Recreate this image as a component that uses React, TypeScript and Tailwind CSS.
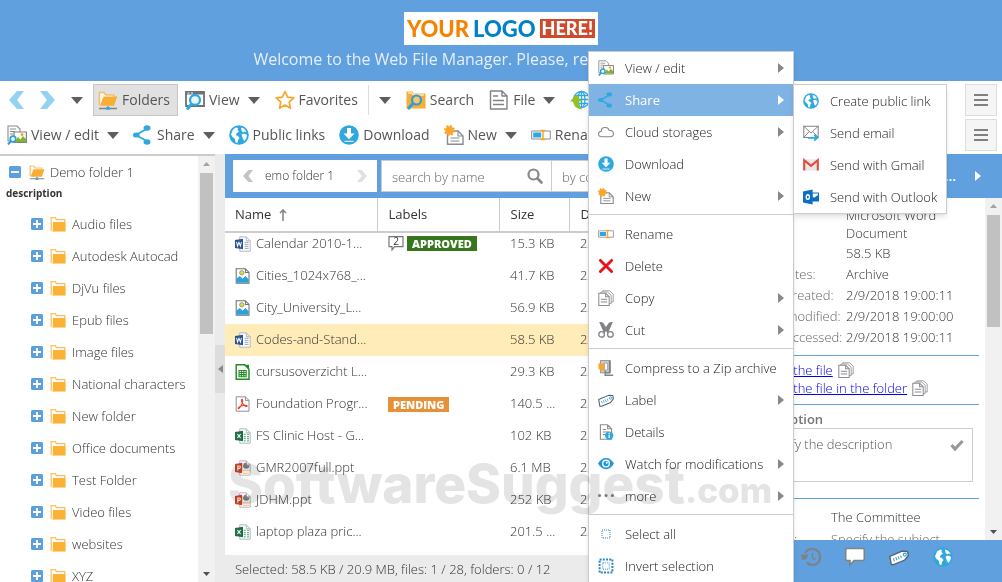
import type { ReactNode } from 'react';

type IconName =
  | 'viewEdit' | 'share' | 'cloud' | 'download' | 'newDoc' | 'rename' | 'delete' | 'copy' | 'cut'
  | 'zip' | 'label' | 'details' | 'eye' | 'more' | 'selectAll' | 'invert' | 'globe' | 'email'
  | 'gmail' | 'outlook' | 'folderOpen' | 'view' | 'star' | 'search' | 'file' | 'webUpload'
  | 'folder' | 'word' | 'image' | 'calc' | 'pdf' | 'excel' | 'ppt' | 'history' | 'comment';

const page = <path d="M3 1h9l5 5v13H3z M12 1v5h5" fill="#fff" stroke="#8a8c90" strokeWidth="1.4" strokeLinejoin="round" />;

const officePage = (
  <path d="M6 1h8l5 5v13H6z M14 1v5h5" fill="#fff" stroke="#a9adb3" strokeWidth="1.1" />
);

const glyphs: Record<IconName, ReactNode> = {
  viewEdit: (
    <>
      <path d="M1 1h9l3 3v12H1z" fill="#fff" stroke="#8a8c90" strokeWidth="1.1" />
      <path d="M3 4h6M3 6.500h5M3 9h3" stroke="#8a8c90" />
      <path d="M7 7h12.400v10.500H7z" fill="#fff" stroke="#808285" strokeWidth="1.2" />
      <path d="m8 17 3-5 2.500 2.500L16 11l3 3v3z" fill="#7fb42a" />
      <circle cx="15" cy="9.500" r="1.500" fill="#f9a72b" />
      <circle cx="6" cy="14" r="2.800" fill="#fff" stroke="#2c9fdc" strokeWidth="1.700" />
      <path d="m4 16-3 3.500" stroke="#2c9fdc" strokeWidth="2" />
    </>
  ),
  share: (
    <>
      <path d="M14.500 3.500 3 10l11.500 6.500" fill="none" stroke="#2fa8e0" strokeWidth="1.800" />
      <ellipse cx="3.300" cy="10" rx="3.300" ry="2.600" fill="#2fa8e0" />
      <ellipse cx="14" cy="3" rx="3.500" ry="2.700" fill="#2fa8e0" />
      <ellipse cx="14" cy="17" rx="3.500" ry="2.700" fill="#2fa8e0" />
    </>
  ),
  cloud: (
    <path d="M5 16q-4.300 0-4.300-3.500Q.700 9.500 4 9q0-4.500 5-4.500 4 0 4.800 3.300 5.500 0 5.500 4.200 0 4-4 4z" fill="#fff" stroke="#808285" strokeWidth="1.300" />
  ),
  download: (
    <>
      <circle cx="10" cy="10" r="9.800" fill="#2fa8e0" />
      <path d="M8 3h4v5.500h3.500L10 14.200 4.500 8.500H8z" fill="#fff" />
      <path d="M5.500 16.300h9" stroke="#fff" strokeWidth="1" />
    </>
  ),
  newDoc: (
    <>
      <path d="M3.500 6H14l5 5v8.300H3.500z" fill="#fff" stroke="#8a8c90" strokeWidth="1.400" />
      <path d="M14 6v5h5M6.500 13h9M6.500 16h9" fill="none" stroke="#8a8c90" strokeWidth="1.100" />
      <circle cx="5.500" cy="5.500" r="4.300" fill="#f9a72b" />
      <circle cx="5.500" cy="5.500" r="4.500" fill="none" stroke="#f9a72b" strokeWidth="2.200" strokeDasharray="1.800 1.730" />
    </>
  ),
  rename: (
    <>
      <path d="M.700 6h18.600v8H.700z" fill="#fff" stroke="#8a8c90" />
      <path d="M2.200 7.500h8v5h-8z" fill="#2fa8e0" />
      <path d="M9.500 5.500h5M9.500 14.500h5M12 5.500v9" stroke="#f9a72b" strokeWidth="1.500" />
    </>
  ),
  delete: <path d="m3 3 14 14M17 3 3 17" stroke="#e5141b" strokeWidth="3.600" strokeLinecap="round" />,
  copy: (
    <>
      <path d="M6 1h8.500L19 5v10H6z" fill="#fff" stroke="#8a8c90" />
      <path d="M3.500 2.500H12l4.500 4V17h-13z" fill="#fff" stroke="#8a8c90" />
      <path d="M1 4h8.500L14 8.500v10.800H1z" fill="#fff" stroke="#8a8c90" strokeWidth="1.300" />
      <path d="M9.500 4v4.500H14M3.500 11.500h8M3.500 15h8" fill="none" stroke="#8a8c90" strokeWidth="1.300" />
    </>
  ),
  cut: (
    <>
      <path d="M2.500.500 6 1.500l4.500 7L8 13zM17.500.500 14 1.500l-4.500 7L12 13z" fill="#808285" stroke="#808285" strokeWidth="1.500" />
      <circle cx="4.500" cy="15.500" r="3.500" fill="#fff" stroke="#808285" strokeWidth="1.600" />
      <circle cx="15.500" cy="15.500" r="3.500" fill="#fff" stroke="#808285" strokeWidth="1.600" />
    </>
  ),
  zip: (
    <>
      <path d="M3 .700h12.500V16H3z" fill="#c9cbce" stroke="#808285" />
      <path d="M14.500 1v15M9 13v3h6M9 17v2h10" fill="none" stroke="#808285" strokeWidth="1.800" />
      <path d="M.500 4.500h7.500v9H4l-3.500-3z" fill="#f9a72b" />
      <path d="M8 4h4v8.500H8z" fill="#fff" stroke="#9a9c9f" />
    </>
  ),
  label: (
    <>
      <path d="M.800 9.300 13 4.200l5.500.300.800 4-3.500 4.500L4.500 17.700H2.300z" fill="#fff" stroke="#54606e" strokeWidth="1.300" strokeLinejoin="round" />
      <circle cx="15.800" cy="7.600" r="1.500" fill="#fff" stroke="#39a9e0" strokeWidth="1.200" />
      <path d="m4.300 11.200 1.200 3M6.700 10.300l1.200 3M9.100 9.400l1.200 3M11.500 8.500l1 2.500" stroke="#39a9e0" strokeWidth="1.100" />
    </>
  ),
  details: (
    <>
      {page}
      <path d="M6 7h4M6 10h7M6 13h4" stroke="#8a8c90" strokeWidth="1.300" />
      <circle cx="14" cy="14.500" r="5.200" fill="#2fa8e0" />
      <path d="M14 13.500v4M14 11v1.500" stroke="#fff" strokeWidth="1.500" />
    </>
  ),
  eye: (
    <>
      <path d="M0 9.500Q4 2.500 10 2.500t10 7q-4 7-10 7t-10-7z" fill="#1e97dc" />
      <circle cx="10" cy="9.500" r="5" fill="#fff" />
      <circle cx="10" cy="9.500" r="3.300" fill="#1e97dc" />
      <circle cx="11" cy="8.500" r="1.200" fill="#fff" />
    </>
  ),
  more: (
    <g fill="#808285">
      <circle cx="2" cy="9.500" r="1.900" />
      <circle cx="10" cy="9.500" r="1.900" />
      <circle cx="18" cy="9.500" r="1.900" />
    </g>
  ),
  selectAll: <path d="M5 5h10v10H5z" fill="none" stroke="#2b87c8" strokeWidth="1.300" strokeDasharray="1.250 1.250" />,
  invert: (
    <>
      <path d="M2 2h16v16H2z" fill="none" stroke="#2b87c8" strokeWidth="2.500" strokeDasharray="2.500 1.500" />
      <path d="M6 6h8v8H6z" fill="none" stroke="#2b87c8" strokeWidth="1.200" strokeDasharray="1.250 1.250" />
    </>
  ),
  globe: (
    <>
      <circle cx="10" cy="10" r="9.800" fill="#2fa8e0" />
      <path d="M4 4.500 7 2.500l2 .500-.500 2L10 6.500 8 8l-1.500 2 2.500 1 1.500 2-1.500 2-.500 3-2-.500-.500-3.500-2.500-2L2 9.500z" fill="#fff" />
      <path d="m12 2.500 3 1 2.800 3.500-2.300-.500-1.500 1-1.500-2zM12.500 9.500l3-1 2.500 1.500-.500 3-2 3-1.500-2z" fill="#fff" />
    </>
  ),
  email: (
    <>
      <path d="M1 1.500h18v14H1z" fill="#fff" stroke="#808285" strokeWidth="1.300" />
      <path d="m1 1.500 9 8.500 9-8.500M1 15.500l6.500-7M19 15.500l-6.500-7" fill="none" stroke="#808285" strokeWidth="1.200" />
      <path d="M6 16h11M14 12.500l4 3.500-4 3.500" fill="none" stroke="#2fa8e0" strokeWidth="2.200" />
    </>
  ),
  gmail: (
    <>
      <path d="M1 3h18v14H1z" fill="#e8e8e8" />
      <path d="M1.500 17V4l8.500 7 8.500-7v13" fill="none" stroke="#e14a3c" strokeWidth="2.600" />
    </>
  ),
  outlook: (
    <>
      <path d="M11 5h8.500v10H11z" fill="#fff" stroke="#0a6fc2" strokeWidth="1.500" />
      <path d="m11 9 3 2 5.500-4v8H11z" fill="#0a6fc2" />
      <path d="m0 3 12-2.500v19L0 17z" fill="#0a6fc2" />
      <ellipse cx="6" cy="10" rx="2" ry="2.800" fill="none" stroke="#fff" strokeWidth="1.700" />
    </>
  ),
  folderOpen: (
    <>
      <path d="M1.500 15V2.500H6L7.500 5H16v3" fill="#fff" stroke="#fbbd61" strokeWidth="1.500" />
      <path d="M5.500 6.500H19.300L16 15.800H2z" fill="#f9ad33" />
      <path d="M1 18.500h18M10 16v2" stroke="#808285" strokeWidth="1.300" />
      <path d="M8 17.300h4v2.400H8z" fill="#2fa8e0" />
    </>
  ),
  view: (
    <>
      <path d="M1 2h18v14H1z" fill="#fff" stroke="#6e7074" strokeWidth="1.800" />
      <path d="M1 3h18" stroke="#6e7074" strokeWidth="3" />
      <path d="M2.500 3h2M6 3h2" stroke="#fff" />
      <circle cx="10" cy="10" r="5" fill="#e9f6fd" stroke="#2fa8e0" strokeWidth="2.300" />
      <path d="m6.500 14-4.500 5.500" stroke="#2fa8e0" strokeWidth="3" />
    </>
  ),
  star: (
    <path d="m10 1.500 2.600 5.700 6.200.700-4.600 4.200 1.300 6.200-5.500-3.200-5.500 3.200 1.300-6.200L1.200 7.900l6.200-.700z" fill="#fff" stroke="#f9a72b" strokeWidth="1.700" strokeLinejoin="round" />
  ),
  search: (
    <>
      <path d="M.500 18.500V1.500h6l1 2h12v15z" fill="#f9ad33" />
      <path d="M2 3h4l1 2h11" fill="none" stroke="#fff" />
      <circle cx="10.500" cy="10" r="4.500" fill="#f9c46c" stroke="#2c9fdc" strokeWidth="2.200" />
      <path d="m7 13.500-5 5.500" stroke="#2c9fdc" strokeWidth="3" />
    </>
  ),
  file: (
    <>
      <path d="M1.500 1H13l5 5v13H1.500z M13 1v5h5" fill="#fff" stroke="#808285" strokeWidth="1.400" strokeLinejoin="round" />
      <path d="M4 6h5M4 10.500h11M4 14.500h11" stroke="#808285" strokeWidth="1.300" />
    </>
  ),
  webUpload: (
    <>
      <g fill="#fff" stroke="#2fa8e0" strokeWidth="1.300">
        <circle cx="11.500" cy="9.500" r="8" />
        <ellipse cx="11.500" cy="9.500" rx="3.500" ry="8" />
        <path d="M5 5.500h13M3.500 9.500h16M5 13.500h13M11.500 1.500v16" />
      </g>
      <path d="m6 4.500 6 7H8.500q0 5 4 8Q3.500 19 3.500 11.500H0z" fill="#94c11f" />
    </>
  ),
  folder: (
    <>
      <path d="M1.500 19V2h5L8 4.500h10.500V8" fill="#fff" stroke="#fbbd61" strokeWidth="1.500" />
      <path d="M1.500 17.500 3 19.300h16V18" fill="none" stroke="#fbd08c" />
      <path d="M3.500 7.500h16V19h-16z" fill="#f9b233" />
    </>
  ),
  word: (
    <>
      {officePage}
      <path d="M12 8h5M12 10.500h5M12 13h5M12 15.500h5" stroke="#7f93b0" />
      <path d="m0 5 10-1.500v13L0 15z" fill="#2a5699" />
      <path d="m2 7.500 1.200 5L5 8l1.800 4.500L8 7.500" fill="none" stroke="#fff" strokeWidth="1.300" />
    </>
  ),
  image: (
    <>
      <path d="M1.500 1H13l4.500 4.500V19h-16z M13 1v4.500h4.500" fill="#fff" stroke="#6e7074" strokeWidth="1.300" />
      <circle cx="8.500" cy="6" r="2.700" fill="#e9d94a" stroke="#808285" />
      <path d="M2 18.500v-5L6 10l3.500 3.500L13 10l4 4v4.500z" fill="#2c9fdc" />
    </>
  ),
  calc: (
    <>
      <path d="M1.500 1H12l5.500 5.500V19h-16z" fill="#fff" stroke="#238a26" strokeWidth="1.800" />
      <path d="M12 1h5.500v5.500z" fill="#238a26" />
      <path d="M5 8h9v8H5zM5 10.700h9M5 13.300h9M8 8v8M11 8v8" fill="none" stroke="#238a26" strokeWidth="1.300" />
    </>
  ),
  pdf: (
    <>
      <path d="M1.500 1H13l4.500 4.500V19h-16z M13 1v4.500h4.500" fill="#fff" stroke="#8a8c90" strokeWidth="1.200" />
      <path d="M8.500 4q2 0 .500 5-1.500 5-4.500 7-2-1 3-3.500 4-1.500 7.500-.500.500 2-2.500.500Q8 9 8 5z" fill="none" stroke="#e5432e" strokeWidth="1.300" />
    </>
  ),
  excel: (
    <>
      {officePage}
      <path d="M11 8h2.500M15 8h2.500M11 10.700h2.500M15 10.700h2.500M11 13.400h2.500M15 13.400h2.500M11 16h2.500M15 16h2.500" stroke="#6db58a" strokeWidth="1.500" />
      <path d="m0 5 10-1.500v13L0 15z" fill="#1e7145" />
      <path d="m3 7.500 4 5M7 7.500l-4 5" stroke="#fff" strokeWidth="1.400" />
    </>
  ),
  ppt: (
    <>
      {officePage}
      <path d="M12 3.500h2.500v3H18q0 4.500-4 4.500t-4-4z" fill="#808285" />
      <path d="M10 13.500h8M10 16.500h8" stroke="#f0b26a" strokeWidth="1.200" />
      <path d="m0 5 9-1.500v13L0 15z" fill="#d24625" />
      <path d="M3.500 13V7.500H6q1.500 1.500 0 3H3.500" fill="none" stroke="#fff" strokeWidth="1.400" />
    </>
  ),
  history: (
    <>
      <path d="M4 6q3-4.500 8-4 7 1 7 8t-7 8q-4 0-6-2.500" fill="none" stroke="#808285" strokeWidth="2.200" />
      <path d="M0 7.500h7.500L5.500 12 1 13z" fill="#808285" />
      <path d="M11.500 6v5l3 1.500" fill="none" stroke="#808285" strokeWidth="1.500" />
    </>
  ),
  comment: (
    <path d="M2 1.500h16q1.300 0 1.300 1.500v9q0 1.500-1.300 1.500H9L5 18v-4.500H2Q.700 13.500.700 12V3Q.700 1.500 2 1.500z" fill="#fff" stroke="#808285" strokeWidth="1.600" />
  ),
};

function Icon({ name, className = 'size-5' }: { name: IconName; className?: string }) {
  return (
    <svg viewBox="0 0 20 20" className={`shrink-0 ${className}`} aria-hidden="true">
      {glyphs[name]}
    </svg>
  );
}

function Caret() {
  return (
    <svg viewBox="0 0 12 7" className="h-[7px] w-3 shrink-0 text-[#5e5e5e]" aria-hidden="true">
      <path d="M0 0h12L6 7z" fill="currentColor" />
    </svg>
  );
}

function RightArrow({ className }: { className: string }) {
  return (
    <svg viewBox="0 0 6 10" className={`h-2.5 w-1.5 shrink-0 ${className}`} aria-hidden="true">
      <path d="M0 0v10l6-5z" fill="currentColor" />
    </svg>
  );
}

function Chevron({ left = false, className }: { left?: boolean; className: string }) {
  return (
    <svg viewBox="0 0 15 18" className={`shrink-0 ${className}`} aria-hidden="true">
      <path d={left ? 'M8 0h7L8 9l7 9H8L0 9z' : 'M7 0H0l7 9-7 9h7l8-9z'} fill="currentColor" />
    </svg>
  );
}

interface Tool {
  icon: IconName;
  text: string;
  menu?: boolean;
  active?: boolean;
}

function ToolButton({ icon, text, menu, active }: Tool) {
  return (
    <button
      className={`flex h-8 shrink-0 items-center gap-1 border pr-[7px] pl-1 ${
        active ? 'border-[#c6c6c6] bg-[#e1e1e1]' : 'border-transparent'
      }`}
    >
      <Icon name={icon} />
      <span>{text}</span>
      {menu && (
        <span className="pl-1">
          <Caret />
        </span>
      )}
    </button>
  );
}

const mainTools: Tool[] = [
  { icon: 'folderOpen', text: 'Folders', active: true },
  { icon: 'view', text: 'View', menu: true },
  { icon: 'star', text: 'Favorites' },
];

const extraTools: Tool[] = [
  { icon: 'search', text: 'Search' },
  { icon: 'file', text: 'File', menu: true },
  { icon: 'webUpload', text: 'Web folders' },
];

const fileTools: Tool[] = [
  { icon: 'viewEdit', text: 'View / edit', menu: true },
  { icon: 'share', text: 'Share', menu: true },
  { icon: 'globe', text: 'Public links' },
  { icon: 'download', text: 'Download' },
  { icon: 'newDoc', text: 'New', menu: true },
  { icon: 'rename', text: 'Rename' },
];

function Toolbar() {
  return (
    <div className="flex h-[73px] shrink-0 bg-white text-sm text-[#555]">
      <div className="flex min-w-0 flex-1 flex-col gap-[3px] overflow-hidden pt-[3px]">
        <div className="flex items-center gap-[2px] pl-px">
          <button className="px-2 text-[#93d2f2]" aria-label="Back">
            <Chevron left className="h-[18px] w-[15px]" />
          </button>
          <button className="px-1.5 text-[#93d2f2]" aria-label="Forward">
            <Chevron className="h-[18px] w-[15px]" />
          </button>
          <button className="px-2" aria-label="History">
            <Caret />
          </button>
          {mainTools.map((tool) => (
            <ToolButton key={tool.text} {...tool} />
          ))}
          <div className="h-[30px] w-px shrink-0 bg-[#ddd]" />
          <button className="px-2" aria-label="More favorites">
            <Caret />
          </button>
          {extraTools.map((tool) => (
            <ToolButton key={tool.text} {...tool} />
          ))}
        </div>
        <div className="flex items-center gap-px pl-[2px]">
          {fileTools.map((tool) => (
            <ToolButton key={tool.text} {...tool} />
          ))}
        </div>
      </div>
      <div className="flex flex-col gap-[3px] px-[5px] pt-[3px]">
        {['Main menu', 'File menu'].map((name) => (
          <button
            key={name}
            aria-label={name}
            className="flex size-8 flex-col items-center justify-center gap-[3px] border border-[#ddd] bg-[#f5f5f5]"
          >
            <span className="h-[2px] w-3.5 bg-[#808080]" />
            <span className="h-[2px] w-3.5 bg-[#808080]" />
            <span className="h-[2px] w-3.5 bg-[#808080]" />
          </button>
        ))}
      </div>
    </div>
  );
}

function ScrollBar({ thumb }: { thumb: string }) {
  return (
    <div className="flex w-[17px] shrink-0 flex-col items-center bg-[#f1f1f1] py-1.5">
      <svg viewBox="0 0 7 4" className="mb-[7px] h-1 w-[7px] shrink-0" aria-hidden="true">
        <path d="M0 4h7L3.500 0z" fill="#a3a3a3" />
      </svg>
      <div className={`w-[13px] bg-[#c1c1c1] ${thumb}`} />
      <svg viewBox="0 0 7 4" className="mt-auto h-1 w-[7px] shrink-0" aria-hidden="true">
        <path d="M0 0h7L3.500 4z" fill="#505050" />
      </svg>
    </div>
  );
}

function Expander({ open = false }: { open?: boolean }) {
  return (
    <button aria-label={open ? 'Collapse' : 'Expand'} className="size-3 shrink-0">
      <svg viewBox="0 0 12 12" className="size-3" aria-hidden="true">
        <rect width="12" height="12" rx="1.500" fill="#5c9fdd" />
        <path d={open ? 'M2 6h8' : 'M2 6h8M6 2v8'} stroke="#fff" strokeWidth="1.800" />
      </svg>
    </button>
  );
}

const folders = [
  'Audio files', 'Autodesk Autocad', 'DjVu files', 'Epub files', 'Image files', 'National characters',
  'New folder', 'Office documents', 'Test Folder', 'Video files', 'websites', 'XYZ',
];

function FolderTree() {
  return (
    <div className="flex w-[215px] shrink-0 border-t-2 border-[#ccc] bg-white">
      <div className="min-w-0 flex-1 overflow-hidden text-[13px] font-light text-[#333]">
        <div className="flex h-8 items-center pl-[9px]">
          <Expander open />
          <Icon name="folderOpen" className="ml-2 size-4" />
          <span className="ml-[5px] pt-[2px]">Demo folder 1</span>
        </div>
        <p className="mb-2.5 h-2.5 pl-1.5 text-[10px] leading-none font-bold">description</p>
        <ul>
          {folders.map((name) => (
            <li key={name} className="flex h-8 items-center pl-[31px]">
              <Expander />
              <Icon name="folder" className="ml-[7px] size-4" />
              <span className="ml-1.5 pt-[2px]">{name}</span>
            </li>
          ))}
        </ul>
      </div>
      <ScrollBar thumb="h-[161px]" />
    </div>
  );
}

interface FileRow {
  icon: IconName;
  name: string;
  size: string;
  label?: string;
  labelColor?: string;
  comments?: number;
  selected?: boolean;
}

const files: FileRow[] = [
  { icon: 'word', name: 'Calendar 2010-1...', size: '15.3 KB', label: 'APPROVED', labelColor: 'bg-[#37761d]', comments: 2 },
  { icon: 'image', name: 'Cities_1024x768_...', size: '41.7 KB' },
  { icon: 'image', name: 'City_University_L...', size: '56.9 KB' },
  { icon: 'word', name: 'Codes-and-Stand...', size: '58.5 KB', selected: true },
  { icon: 'calc', name: 'cursusoverzicht L...', size: '29.3 KB' },
  { icon: 'pdf', name: 'Foundation Progr...', size: '140.5 ...', label: 'PENDING', labelColor: 'bg-[#e69138]' },
  { icon: 'excel', name: 'FS Clinic Host - G...', size: '102 KB' },
  { icon: 'ppt', name: 'GMR2007full.ppt', size: '6.1 MB' },
  { icon: 'ppt', name: 'JDHM.ppt', size: '252 KB' },
  { icon: 'excel', name: 'laptop plaza pric...', size: '201.5 ...' },
];

function FileList() {
  return (
    <div className="flex min-w-0 flex-1 flex-col bg-white">
      <div className="flex h-11 shrink-0 items-center gap-1 bg-[#60a0de] pl-2 text-[13px] font-light text-[#333]">
        <div className="flex h-8 w-36 shrink-0 items-center bg-white px-2.5">
          <Chevron left className="h-4 w-2.5 text-[#c4c4c4]" />
          <span className="flex-1 overflow-hidden pl-3 text-xs whitespace-nowrap">emo folder 1</span>
          <Chevron className="h-4 w-2.5 text-[#e0e0e0]" />
        </div>
        <div className="flex min-w-0 flex-1 border border-[#ccc] bg-white">
          <div className="flex h-[30px] w-[170px] shrink-0 items-center border-r border-[#ccc] pr-2 pl-2.5">
            <input
              aria-label="search by name"
              placeholder="search by name"
              className="h-full min-w-0 flex-1 pt-[2px] outline-none placeholder:text-[#666]"
            />
            <svg viewBox="0 0 16 16" className="size-4 shrink-0" aria-hidden="true">
              <circle cx="6.500" cy="6.500" r="5" fill="none" stroke="#888" strokeWidth="2.200" />
              <path d="m10.500 10.500 4 4" stroke="#888" strokeWidth="2.600" strokeLinecap="round" />
            </svg>
          </div>
          <input
            aria-label="by contents"
            placeholder="by contents"
            className="h-[30px] min-w-0 flex-1 pt-[2px] pl-2.5 outline-none placeholder:text-[#666]"
          />
        </div>
      </div>
      <div className="min-h-0 flex-1 overflow-hidden">
        <table className="w-full table-fixed text-left text-[13px] text-[#333]">
          <thead>
            <tr className="h-[34px] border-b-2 border-[#ccc]">
              <th className="w-[152px] border-r border-[#ccc] pl-2.5 font-normal">
                <span className="flex items-center gap-2">
                  Name
                  <svg viewBox="0 0 8 12" className="h-3 w-2" aria-hidden="true">
                    <path d="M4 12V1M1 4l3-3 3 3" fill="none" stroke="#888" strokeWidth="1.600" />
                  </svg>
                </span>
              </th>
              <th className="w-[122px] border-r border-[#ccc] pl-[11px] font-normal">Labels</th>
              <th className="w-[70px] border-r border-[#ccc] pl-[11px] font-normal">Size</th>
              <th className="pl-[11px] font-normal">Date</th>
            </tr>
          </thead>
          <tbody className="font-light">
            {files.map((file) => (
              <tr key={file.name} className={`h-8 first:h-7 first:*:pb-1.5 ${file.selected ? 'bg-[#ffecb8]' : ''}`}>
                <td className="pl-2.5">
                  <span className="flex items-center gap-[5px] whitespace-nowrap">
                    <Icon name={file.icon} className="size-4" />
                    {file.name}
                  </span>
                </td>
                <td className="pl-[11px]">
                  {file.label && (
                    <span className="flex items-center gap-[3px] leading-none">
                      {file.comments && (
                        <span className="relative flex h-[15px] w-4 justify-center text-[10px] leading-[11px] font-normal">
                          <svg viewBox="0 0 16 15" className="absolute inset-0" aria-hidden="true">
                            <path d="M1 .700h14v10H6.500L4 14v-3.300H1z" fill="none" stroke="#777" strokeWidth="1.200" />
                          </svg>
                          {file.comments}
                        </span>
                      )}
                      <span className={`flex h-[15px] items-center px-[5px] text-[11px] font-extrabold text-white ${file.labelColor}`}>
                        {file.label}
                      </span>
                    </span>
                  )}
                </td>
                <td className="pl-[11px] whitespace-nowrap">{file.size}</td>
                <td className="pl-[11px] whitespace-nowrap">2/9/2018</td>
              </tr>
            ))}
          </tbody>
        </table>
      </div>
      <div className="flex h-[27px] shrink-0 items-center bg-[#ebebeb] pt-[2px] pl-2.5 text-[13px] font-light text-[#333]">
        Selected: 58.5 KB / 20.9 MB, files: 1 / 28, folders: 0 / 12
      </div>
    </div>
  );
}

const properties = [
  ['Size:', '58.5 KB'],
  ['Attributes:', 'Archive'],
  ['Date created:', '2/9/2018 19:00:11'],
  ['Date modified:', '2/9/2018 19:00:00'],
  ['Date accessed:', '2/9/2018 19:00:11'],
];

const panelTools: IconName[] = ['history', 'comment', 'label', 'globe'];

function DetailsPanel() {
  return (
    <div className="flex w-[262px] shrink-0 flex-col bg-white">
      <div className="flex h-11 shrink-0 items-center bg-[#60a0de] pr-[21px] pl-5 text-sm font-semibold text-white">
        <span className="min-w-0 flex-1 truncate">Codes-and-Standards-2017.docx</span>
        <span className="pl-4">
          <RightArrow className="text-white" />
        </span>
      </div>
      <div className="flex min-h-0 flex-1">
        <div className="min-w-0 flex-1 overflow-hidden pt-2 pr-1.5 pl-[11px] text-[13px] font-light text-[#333]">
          <dl className="pl-1 leading-[21px]">
            <div className="flex pb-px leading-[18px]">
              <dt className="w-[91px] text-[#666]">Type:</dt>
              <dd className="flex-1">Microsoft Word Document</dd>
            </div>
            {properties.map(([name, value]) => (
              <div key={name} className="flex whitespace-nowrap">
                <dt className="w-[91px] text-[#666]">{name}</dt>
                <dd>{value}</dd>
              </div>
            ))}
          </dl>
          <div className="mt-[7px] border-y border-[#60a0de] pt-[5px] pb-[7px] leading-[18px]">
            <p className="flex items-center gap-[5px]">
              <a href="#file" className="text-[#0000ee] underline">Link to the file</a>
              <Icon name="copy" className="size-4" />
            </p>
            <p className="flex items-center gap-[5px]">
              <a href="#folder" className="text-[#0000ee] underline">Link to the file in the folder</a>
              <Icon name="copy" className="size-4" />
            </p>
          </div>
          <div className="border-b border-[#60a0de] pt-[5px] pr-1.5 pb-4">
            <label htmlFor="description" className="block leading-[18px] font-semibold text-[#777]">
              Description
            </label>
            <div className="flex h-[54px] border border-[#ccc] px-2 pt-1.5">
              <textarea
                id="description"
                placeholder="Specify the description"
                className="min-w-0 flex-1 resize-none outline-none placeholder:text-[#555]"
              />
              <svg viewBox="0 0 14 12" className="mt-1 h-3 w-3.5 shrink-0" aria-hidden="true">
                <path d="m1.500 6 3.500 4 7.500-8" fill="none" stroke="#999" strokeWidth="3.200" />
              </svg>
            </div>
          </div>
          <dl className="pt-[7px] leading-[22px]">
            <div className="flex">
              <dt className="w-20 text-[#666]">Title:</dt>
              <dd>The Committee</dd>
            </div>
            <div className="flex text-[#666]">
              <dt className="w-20">Subject:</dt>
              <dd>Specify the subject</dd>
            </div>
          </dl>
        </div>
        <ScrollBar thumb="h-28" />
      </div>
      <div className="flex h-[42px] shrink-0 items-start justify-end gap-6 bg-[#60a0de] pt-[7px] pr-[49px]">
        {panelTools.map((name) => (
          <button key={name} aria-label={name}>
            <Icon name={name} />
          </button>
        ))}
      </div>
    </div>
  );
}

interface MenuEntry {
  icon: IconName;
  text: string;
  sub?: boolean;
}

const menuGroups: MenuEntry[][] = [
  [
    { icon: 'viewEdit', text: 'View / edit', sub: true },
    { icon: 'share', text: 'Share', sub: true },
    { icon: 'cloud', text: 'Cloud storages', sub: true },
    { icon: 'download', text: 'Download' },
    { icon: 'newDoc', text: 'New', sub: true },
  ],
  [
    { icon: 'rename', text: 'Rename' },
    { icon: 'delete', text: 'Delete' },
    { icon: 'copy', text: 'Copy', sub: true },
    { icon: 'cut', text: 'Cut', sub: true },
  ],
  [
    { icon: 'zip', text: 'Compress to a Zip archive' },
    { icon: 'label', text: 'Label', sub: true },
    { icon: 'details', text: 'Details' },
    { icon: 'eye', text: 'Watch for modifications', sub: true },
    { icon: 'more', text: 'more', sub: true },
  ],
  [
    { icon: 'selectAll', text: 'Select all' },
    { icon: 'invert', text: 'Invert selection' },
  ],
];

const shareMenu: MenuEntry[] = [
  { icon: 'globe', text: 'Create public link' },
  { icon: 'email', text: 'Send email' },
  { icon: 'gmail', text: 'Send with Gmail' },
  { icon: 'outlook', text: 'Send with Outlook' },
];

function MenuItem({ icon, text, sub }: MenuEntry) {
  const open = text === 'Share';
  return (
    <div className="relative">
      <button
        className={`flex h-8 w-full items-center px-[9px] whitespace-nowrap ${
          open ? 'bg-[#7fb3e3] font-normal text-white' : ''
        }`}
      >
        <Icon name={icon} className="size-4" />
        <span className="ml-[11px] flex-1 pt-[2px] text-left">{text}</span>
        {sub && <RightArrow className={open ? 'text-white' : 'text-[#888]'} />}
      </button>
      {open && (
        <div className="absolute top-0 left-full w-[154px] border border-[#ccc] bg-white font-light text-[#222] shadow-md">
          {shareMenu.map((item) => (
            <MenuItem key={item.text} {...item} />
          ))}
        </div>
      )}
    </div>
  );
}

function ContextMenu() {
  return (
    <div className="absolute top-[51px] bottom-0 left-[588px] w-[206px] border border-b-0 border-[#ccc] bg-white text-[13px] font-light text-[#222] shadow-md">
      {menuGroups.map((group, i) => (
        <div key={i}>
          {i > 0 && <hr className="mt-[2px] mb-[3px] border-[#ccc]" />}
          {group.map((item) => (
            <MenuItem key={item.text} {...item} />
          ))}
        </div>
      ))}
    </div>
  );
}

function App() {
  return (
    <div className="relative flex h-screen flex-col overflow-hidden bg-[#ebebeb] font-['Open_Sans',sans-serif]">
      <header className="flex h-[81px] shrink-0 flex-col items-center bg-[#60a0de] pt-3">
        <div className="flex h-[33px] items-center gap-1 bg-white px-[3px] font-['Lato',sans-serif] text-[22px] leading-none font-black">
          <span className="text-[#f58200]">YOUR</span>
          <span className="text-[#0082c8]">LOGO</span>
          <span className="bg-[#cf4a2b] px-[2px] text-lg leading-[19px] text-white">HERE!</span>
        </div>
        <p className="mt-[2px] text-base text-[#e6eef7]">
          Welcome to the Web File Manager. Please, read these instructions.
        </p>
      </header>
      <Toolbar />
      <main className="flex min-h-0 flex-1">
        <FolderTree />
        <div className="flex w-2.5 shrink-0 flex-col bg-[#ebebeb] pt-[191px]">
          <button aria-label="Hide folders" className="flex h-12 items-center justify-center bg-[#ddd]">
            <svg viewBox="0 0 5 8" className="h-2 w-[5px]" aria-hidden="true">
              <path d="M5 0v8L0 4z" fill="#888" />
            </svg>
          </button>
        </div>
        <FileList />
        <DetailsPanel />
      </main>
      <ContextMenu />
      <div className="pointer-events-none absolute bottom-[71px] left-[228px] font-['Inter',sans-serif] text-[53px] leading-none font-extrabold text-[#e4e4e4] mix-blend-multiply">
        SoftwareSuggest<span className="text-[35px]">.com</span>
      </div>
    </div>
  );
}

export default App;
